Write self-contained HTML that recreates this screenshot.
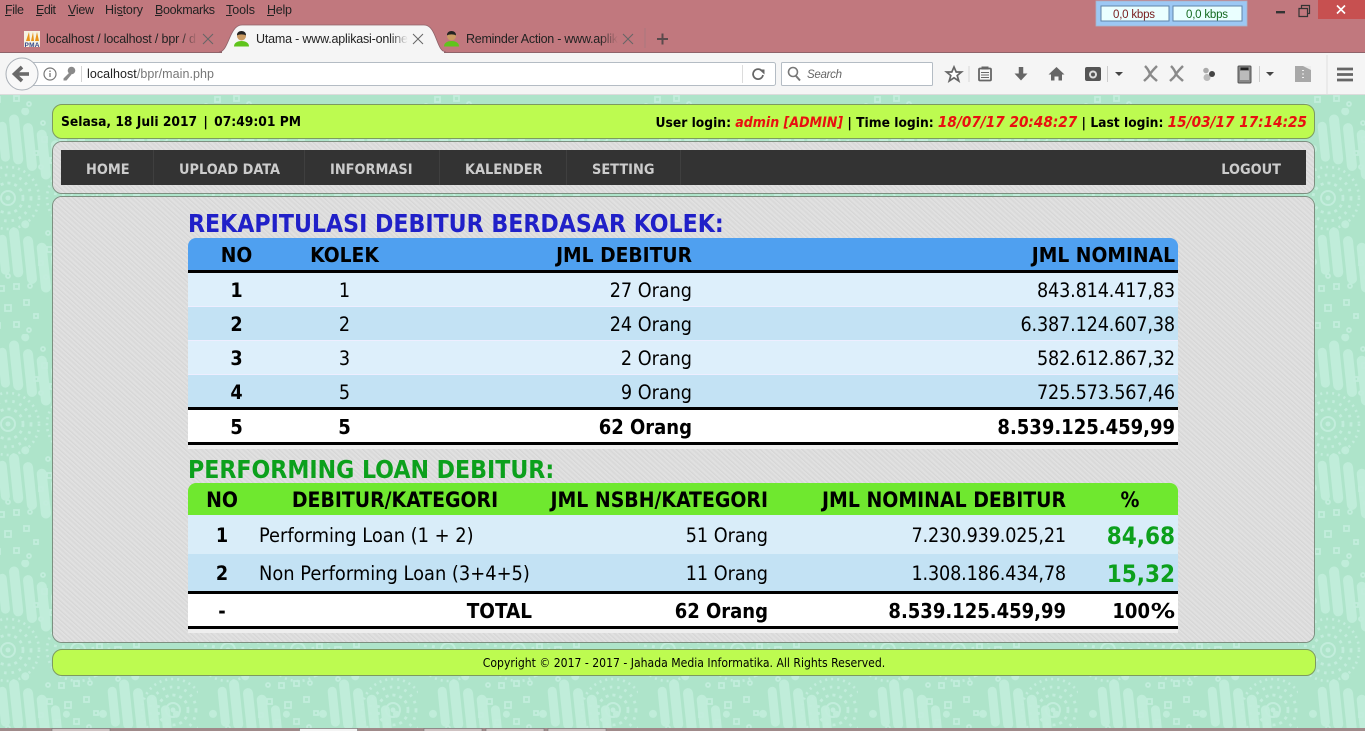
<!DOCTYPE html>
<html><head><meta charset="utf-8"><title>Utama</title>
<style>
*{box-sizing:border-box}
html,body{margin:0;padding:0;width:1365px;height:731px;overflow:hidden;background:#aee4ca;font-family:"DejaVu Sans Condensed","DejaVu Sans","Liberation Sans",sans-serif;font-stretch:condensed;color:#000}
.a{position:absolute}
svg.bg{position:absolute;left:0;top:0;width:100%;height:100%}
.panel{position:absolute;border:1px solid #7d8f80;border-radius:10px;overflow:hidden;background:#dcdcdc}
.lime{position:absolute;border:1px solid #7d9a60;border-radius:10px;background:#bdfb50}
.top{font-size:13.700px;font-weight:bold;line-height:37px;white-space:nowrap}
.top i{color:#e81010;font-size:15.150px}
.top i.u{font-size:14px}
.top s{text-decoration:none;margin:0 2px}
.nav{position:absolute;left:61px;top:150px;width:1245px;height:35px;background:#333}
.nav span{position:absolute;top:0;line-height:41px;color:#ccc;font-weight:bold;font-size:14.400px;white-space:nowrap}
.nav b{position:absolute;top:0;width:1px;height:35px;background:#3f3f3f}
h2{position:absolute;margin:0;font-size:24.600px;font-weight:bold;line-height:28px;white-space:nowrap}
table{position:absolute;border-collapse:collapse;table-layout:fixed;font-size:19.600px}
td,th{padding:0;white-space:nowrap}
th{font-size:20.800px;padding-top:1px}
td{padding-top:2px}
tr.k td{padding:0;font-size:1px;line-height:1px}
.t2 th{font-size:21px}
.n{letter-spacing:-.15px}
.bd td{font-size:20px;font-weight:bold}
.c{text-align:center}.r{text-align:right}.l{text-align:left}
.pc{display:inline-block;transform:scaleX(1.35);transform-origin:right center;margin-left:7px}
</style></head><body>
<svg class="bg" viewBox="0 0 1365 731">
<defs>
<g id="bars" fill="#c0edda" transform="rotate(-6)">
<rect x="-3" y="2" width="9" height="40" rx="4.500"/><rect x="9" y="-4" width="10" height="50" rx="5"/><rect x="22" y="6" width="10" height="48" rx="5"/><rect x="35" y="14" width="10" height="50" rx="5"/><rect x="48" y="26" width="9" height="42" rx="4.500"/><circle cx="-10" cy="28" r="4"/><circle cx="63" cy="36" r="3.500"/><circle cx="26" cy="-6" r="4"/>
</g>
<g id="circ" fill="none" stroke="#c2eddc">
<circle r="31" stroke-width="2.600" stroke-dasharray="2 4"/><circle r="23" stroke-width="2.800" stroke-dasharray="2.500 5"/><circle r="15" stroke-width="2.800" stroke-dasharray="3 4"/><circle r="7" stroke-width="2"/><circle r="2" fill="#c2eddc"/>
</g>
<g id="sq" fill="none" stroke="#c2eddc" stroke-width="1.800">
<rect x="-3" y="-3" width="6" height="6"/><rect x="-21" y="-6" width="5" height="5"/><rect x="16" y="-8" width="5" height="5"/><rect x="-9" y="-22" width="5" height="5"/><rect x="6" y="14" width="5" height="5"/><rect x="-13" y="15" width="5" height="5"/><rect x="6" y="-24" width="5" height="5"/><rect x="-29" y="8" width="4" height="4"/><rect x="26" y="6" width="4" height="4"/><circle cx="0" cy="29" r="2"/><circle cx="0" cy="-32" r="2"/><circle cx="-20" cy="-20" r="2"/><circle cx="21" cy="22" r="2"/><circle cx="22" cy="-22" r="2"/><circle cx="-22" cy="24" r="2"/>
</g>
<pattern id="batik" x="-22" y="108" width="220" height="226" patternUnits="userSpaceOnUse">
<use href="#bars" x="22" y="12"/><use href="#bars" x="132" y="12"/><use href="#bars" x="22" y="125"/><use href="#bars" x="132" y="125"/>
<use href="#circ" x="30" y="90"/><use href="#sq" x="30" y="200"/><use href="#sq" x="85" y="35"/><use href="#circ" x="195" y="35"/>
<use href="#circ" x="195" y="150"/><use href="#sq" x="90" y="145"/><use href="#sq" x="140" y="90"/><use href="#circ" x="100" y="90"/>
</pattern>
<pattern id="steel" width="7" height="7" patternUnits="userSpaceOnUse" patternTransform="rotate(42)">
<rect width="7" height="7" fill="#dddddd"/>
<rect y="1" width="7" height="1" fill="#d5d5d5"/><rect y="2" width="7" height="1" fill="#e3e3e3"/>
<rect y="4" width="7" height="1" fill="#d8d8d8"/><rect y="6" width="7" height="1" fill="#e2e2e2"/>
</pattern>
<linearGradient id="fade1"><stop offset="0" stop-color="#c1787e" stop-opacity="0"/><stop offset="1" stop-color="#c1787e"/></linearGradient>
<linearGradient id="fade2"><stop offset="0" stop-color="#f5f5f5" stop-opacity="0"/><stop offset="1" stop-color="#f5f5f5"/></linearGradient>
</defs>
<rect width="1365" height="731" fill="#aee4ca"/>
<rect width="1365" height="731" fill="url(#batik)"/>
<!-- taskbar strip -->
<rect y="728" width="1365" height="3" fill="#a08a8a"/>
<g fill="#cfc2c2" stroke="#777" stroke-width=".6"><rect x="52" y="728.500" width="58" height="4"/><rect x="424" y="728.500" width="58" height="4"/><rect x="486" y="728.500" width="58" height="4"/><rect x="548" y="728.500" width="58" height="4"/></g>
<rect x="299.500" y="728.500" width="58" height="4" fill="#f4f4f4" stroke="#777" stroke-width=".6"/>

<!-- title / tab bar -->
<rect width="1365" height="53" fill="#c1787e"/>
<rect y="52" width="1365" height="1" fill="#8f636a"/>
<rect y="53" width="1365" height="42" fill="#f5f5f5"/>
<rect y="94" width="1365" height="1" fill="#dcdcdc"/>
<g font-family="Liberation Sans,sans-serif" font-size="12.500" fill="#222">
<text x="5" y="14" textLength="19">File</text><text x="36" y="14" textLength="20">Edit</text><text x="68" y="14" textLength="26">View</text><text x="105" y="14" textLength="38">History</text><text x="155" y="14" textLength="60">Bookmarks</text><text x="226" y="14" textLength="29">Tools</text><text x="267" y="14" textLength="25">Help</text>
</g>
<g stroke="#222" stroke-width="1"><path d="M5 15.500h6M36 15.500h6M68 15.500h7M118 15.500h5M155 15.500h7M226 15.500h6M267 15.500h7"/></g>

<!-- active tab -->
<path d="M219 52C229 52 229 25 242 25H424C437 25 436 52 446 52Z" fill="#f5f5f5" stroke="#8f636a" stroke-width=".8"/>
<rect x="222" y="51.500" width="222" height="2" fill="#f5f5f5"/>
<!-- favicon pma -->
<g><rect x="24" y="31" width="16" height="16" fill="#f6f2e2"/><path d="M26 41L29 32l1 9zM31 41l2-9 1 9zM35 41l2-9 2 9z" fill="#e8941a"/><text x="24.500" y="47" font-family="Liberation Sans,sans-serif" font-size="6.500" font-weight="bold" fill="#334488" textLength="15">PMA</text></g>
<!-- person icons -->
<g><circle cx="241.500" cy="36" r="4.500" fill="#c99a62"/><path d="M237 35.500c-.5-6 9.500-6 9 0-2-1.500-7-1.500-9 0z" fill="#222"/><path d="M234 46.500c0-3.500 3-5.500 7.500-5.500s7.500 2 7.500 5.500z" fill="#5fc41c"/></g>
<g><circle cx="451.500" cy="36" r="4.500" fill="#c99a62"/><path d="M447 35.500c-.5-6 9.500-6 9 0-2-1.500-7-1.500-9 0z" fill="#222"/><path d="M444 46.500c0-3.500 3-5.500 7.500-5.500s7.500 2 7.500 5.500z" fill="#5fc41c"/></g>
<g font-family="Liberation Sans,sans-serif" font-size="12.500" fill="#222">
<text x="46" y="43" textLength="150">localhost / localhost / bpr / d</text>
<text x="256" y="43" textLength="152">Utama - www.aplikasi-online</text>
<text x="466" y="43" textLength="152">Reminder Action - www.aplik</text>
</g>
<rect x="180" y="30" width="18" height="18" fill="url(#fade1)"/>
<rect x="390" y="30" width="18" height="18" fill="url(#fade2)"/>
<rect x="600" y="30" width="18" height="18" fill="url(#fade1)"/>
<g stroke="#666" stroke-width="1" fill="none"><path d="M203 34l10 10m0-10l-10 10M413 34l10 10m0-10l-10 10M623 34l10 10m0-10l-10 10"/></g>
<path d="M645 28v20" stroke="#a9787e"/>
<path d="M657 39h11M662.500 33.500v11" stroke="#5a4a4c" stroke-width="2"/>

<!-- window controls -->
<rect x="1096" y="1" width="151" height="25" fill="#9cc8f4" stroke="#aab4c8" stroke-width=".8"/>
<rect x="1101" y="6" width="68" height="15" fill="#eaffff" stroke="#5f84a8"/>
<rect x="1173" y="6" width="69" height="15" fill="#eaffff" stroke="#5f84a8"/>
<g font-family="Liberation Sans,sans-serif" font-size="11.500"><text x="1113" y="18" fill="#7a2020" textLength="42">0,0 kbps</text><text x="1186" y="18" fill="#156a20" textLength="42">0,0 kbps</text></g>
<rect x="1276" y="11" width="9" height="2.400" fill="#333"/>
<path d="M1299 8.500h8.500v8h-8.500zM1301.500 8.500v-3h8v8h-2" fill="none" stroke="#333" stroke-width="1.200"/>
<rect x="1318" y="0" width="47" height="19" fill="#c75050"/>
<path d="M1337 5.500l8 8m0-8l-8 8" stroke="#fff" stroke-width="1.600"/>

<!-- url bar -->
<rect x="24.500" y="62.500" width="751" height="23" rx="2" fill="#fff" stroke="#b4bcc4"/>
<circle cx="22" cy="74" r="16" fill="#f8f8f8" stroke="#a9afb6"/>
<path d="M15 74h14" stroke="#6a6a6a" stroke-width="3.600"/><path d="M22 67l-7.500 7 7.500 7" fill="none" stroke="#6a6a6a" stroke-width="3.600"/>
<circle cx="50" cy="74" r="6" fill="none" stroke="#777" stroke-width="1.200"/><path d="M50 73v4M50 70.500v1.500" stroke="#777" stroke-width="1.300"/>
<circle cx="71.500" cy="70.500" r="3.800" fill="#8a8a8a"/><path d="M70 72l-6.500 6.500v2h3l5-6" fill="#8a8a8a"/>
<path d="M81.500 66v16" stroke="#d4d4d4"/>
<text x="87" y="78" font-family="Liberation Sans,sans-serif" font-size="12.500" textLength="127"><tspan fill="#222">localhost</tspan><tspan fill="#777">/bpr/main.php</tspan></text>
<path d="M742.500 65v18" stroke="#dcdcdc"/>
<path d="M762 71a5 5 0 1 0 1 4" fill="none" stroke="#666" stroke-width="1.800"/><path d="M759 69.500h5.500v5z" fill="#666"/>
<!-- search -->
<rect x="781.500" y="62.500" width="151" height="23" rx="1" fill="#fff" stroke="#b4bcc4"/>
<circle cx="793" cy="72" r="4.500" fill="none" stroke="#777" stroke-width="1.600"/><path d="M796 76l4 4.500" stroke="#777" stroke-width="2"/>
<text x="807" y="78" font-family="Liberation Sans,sans-serif" font-size="11.500" font-style="italic" fill="#666" textLength="35">Search</text>
<!-- toolbar icons -->
<path d="M954 67l2.200 5h5.300l-4.300 3.500 1.600 5.500-4.800-3.200-4.800 3.200 1.600-5.500-4.300-3.500h5.300z" fill="#fff" stroke="#666" stroke-width="1.700"/>
<path d="M969 66v16" stroke="#d8d8d8"/>
<rect x="979" y="68.500" width="12" height="12" rx="1" fill="none" stroke="#666" stroke-width="1.800"/><path d="M982 67h6v2h-6zM981 72.500h8M981 75h8M981 77.500h8" stroke="#666" fill="#666"/>
<path d="M1021 67v8" stroke="#666" stroke-width="4.500"/><path d="M1014.500 73.500h13l-6.500 7z" fill="#666"/>
<path d="M1056.500 67l-8 7.500h2.500v6h3.500v-4h4v4h3.500v-6h2.500z" fill="#666"/>
<rect x="1085" y="67" width="16" height="14" rx="2" fill="#555"/><circle cx="1093" cy="74.500" r="4" fill="#ddd"/><circle cx="1093" cy="74.500" r="2" fill="#555"/>
<path d="M1107.500 66v16M1259.500 66v16" stroke="#ccc"/>
<path d="M1115 72h8l-4 4z" fill="#444"/>
<path d="M1145 66c3 3 4 5 5 8-1 3-4 5-6 7M1157 66c-3 3-5 5-7 8 2 3 5 5 7 7" fill="none" stroke="#8a8a8a" stroke-width="2.400"/>
<path d="M1171 66c3 3 4 5 5 8-1 3-4 5-6 7M1183 66c-3 3-5 5-7 8 2 3 5 5 7 7" fill="none" stroke="#8a8a8a" stroke-width="2.400"/>
<circle cx="1206" cy="70.500" r="2.800" fill="#aaa"/><circle cx="1207" cy="77.500" r="3.500" fill="#bbb"/><circle cx="1212" cy="74" r="3" fill="#444"/>
<rect x="1238" y="66" width="13" height="17" rx="1" fill="#888" stroke="#555"/><rect x="1240" y="71" width="9" height="9" fill="#bbb"/><rect x="1240.500" y="67.500" width="8" height="2.500" fill="#222"/>
<path d="M1266 72h8l-4 4z" fill="#444"/>
<rect x="1295" y="66" width="16" height="16" fill="#a8a8a8"/><path d="M1303 66l8 4v-4z" fill="#eee"/><path d="M1303 70v1M1303 73.500v1M1303 77v1" stroke="#fff" stroke-width="1.600"/>
<path d="M1327 55v39" stroke="#e0e0e0"/>
<path d="M1337 69h16M1337 74.500h16M1337 80h16" stroke="#666" stroke-width="2.800"/>
</svg>

<!-- top bar -->
<div class="lime" style="left:52px;top:104px;width:1263px;height:35px"></div>
<div class="a top" style="left:61px;top:104px">Selasa, 18 Juli 2017 <s>|</s> 07:49:01 PM</div>
<div class="a top" style="right:58px;top:104px">User login: <i class="u">admin [ADMIN]</i> | Time login: <i>18/07/17 20:48:27</i> | Last login: <i>15/03/17 17:14:25</i></div>

<!-- nav panel -->
<div class="panel" style="left:52px;top:141px;width:1263px;height:53px"><svg width="1263" height="53" style="display:block"><rect width="1263" height="53" fill="url(#steel)"/></svg></div>
<div class="nav">
<span style="left:25px">HOME</span><b style="left:92px"></b>
<span style="left:118px">UPLOAD DATA</span><b style="left:243px"></b>
<span style="left:269px">INFORMASI</span><b style="left:378px"></b>
<span style="left:404px">KALENDER</span><b style="left:505px"></b>
<span style="left:531px">SETTING</span><b style="left:619px"></b>
<span style="right:25px">LOGOUT</span>
</div>

<!-- main panel -->
<div class="panel" style="left:52px;top:196px;width:1263px;height:447px"><svg width="1263" height="447" style="display:block"><rect width="1263" height="447" fill="url(#steel)"/></svg></div>

<h2 style="left:188px;top:210px;color:#2020c8">REKAPITULASI DEBITUR BERDASAR KOLEK:</h2>
<div class="a" style="left:188px;top:445px;width:990px;height:4px;background:#eee"></div>
<table style="left:188px;top:238px;width:990px">
<colgroup><col style="width:97px"><col style="width:119px"><col style="width:288px"><col style="width:486px"></colgroup>
<tr style="height:32px;background:#4fa0f0;font-weight:bold"><th class="c" style="border-radius:8px 0 0 0">NO</th><th class="c">KOLEK</th><th class="r">JML DEBITUR</th><th class="r" style="padding-right:3px;border-radius:0 8px 0 0">JML NOMINAL</th></tr>
<tr class="k" style="height:3px;background:#000"><td colspan="4"></td></tr>
<tr style="height:33px;background:#ddeffb"><td class="c"><b>1</b></td><td class="c">1</td><td class="r">27 Orang</td><td class="r n" style="padding-right:3px">843.814.417,83</td></tr>
<tr class="k" style="height:1px;background:#eef"><td colspan="4"></td></tr>
<tr style="height:33px;background:#c3e2f4"><td class="c"><b>2</b></td><td class="c">2</td><td class="r">24 Orang</td><td class="r n" style="padding-right:3px">6.387.124.607,38</td></tr>
<tr class="k" style="height:1px;background:#eef"><td colspan="4"></td></tr>
<tr style="height:33px;background:#ddeffb"><td class="c"><b>3</b></td><td class="c">3</td><td class="r">2 Orang</td><td class="r n" style="padding-right:3px">582.612.867,32</td></tr>
<tr class="k" style="height:1px;background:#eef"><td colspan="4"></td></tr>
<tr style="height:32px;background:#c3e2f4"><td class="c"><b>4</b></td><td class="c">5</td><td class="r">9 Orang</td><td class="r n" style="padding-right:3px">725.573.567,46</td></tr>
<tr class="k" style="height:3px;background:#000"><td colspan="4"></td></tr>
<tr class="bd" style="height:32px;background:#fff"><td class="c">5</td><td class="c">5</td><td class="r">62 Orang</td><td class="r" style="padding-right:3px">8.539.125.459,99</td></tr>
<tr class="k" style="height:3px;background:#000"><td colspan="4"></td></tr>
</table>

<h2 style="left:188px;top:456px;color:#0ca01c">PERFORMING LOAN DEBITUR:</h2>
<div class="a" style="left:188px;top:629px;width:990px;height:4px;background:#eee"></div>
<table class="t2" style="left:188px;top:483px;width:990px">
<colgroup><col style="width:68px"><col style="width:276px"><col style="width:236px"><col style="width:298px"><col style="width:112px"></colgroup>
<tr style="height:32px;background:#6fe82f;font-weight:bold"><th class="c" style="border-radius:8px 0 0 0">NO</th><th class="c" style="padding-left:2px">DEBITUR/KATEGORI</th><th class="r">JML NSBH/KATEGORI</th><th class="r">JML NOMINAL DEBITUR</th><th class="c" style="border-radius:0 8px 0 0;padding-left:16px">%</th></tr>
<tr style="height:39px;background:#d9edf9"><td class="c"><b>1</b></td><td style="padding-left:3px;font-size:19.850px">Performing Loan (1 + 2)</td><td class="r">51 Orang</td><td class="r n">7.230.939.025,21</td><td class="r" style="padding-right:3px;color:#0ca01c;font-size:24px;font-weight:bold">84,68</td></tr>
<tr style="height:37px;background:#c3e2f4"><td class="c"><b>2</b></td><td style="padding-left:3px;font-size:19.850px">Non Performing Loan (3+4+5)</td><td class="r">11 Orang</td><td class="r n">1.308.186.434,78</td><td class="r" style="padding-right:3px;color:#0ca01c;font-size:24px;font-weight:bold">15,32</td></tr>
<tr class="k" style="height:3px;background:#000"><td colspan="5"></td></tr>
<tr class="bd" style="height:32px;background:#fff"><td class="c">-</td><td class="r" style="font-size:20.500px">TOTAL</td><td class="r">62 Orang</td><td class="r">8.539.125.459,99</td><td class="r" style="padding-right:3px">100<span class="pc">%</span></td></tr>
<tr class="k" style="height:3px;background:#000"><td colspan="5"></td></tr>
</table>

<!-- footer -->
<div class="lime" style="left:52px;top:649px;width:1264px;height:27px;text-align:center;font-size:12.100px;line-height:26px">Copyright © 2017 - 2017 - Jahada Media Informatika. All Rights Reserved.</div>
</body></html>
